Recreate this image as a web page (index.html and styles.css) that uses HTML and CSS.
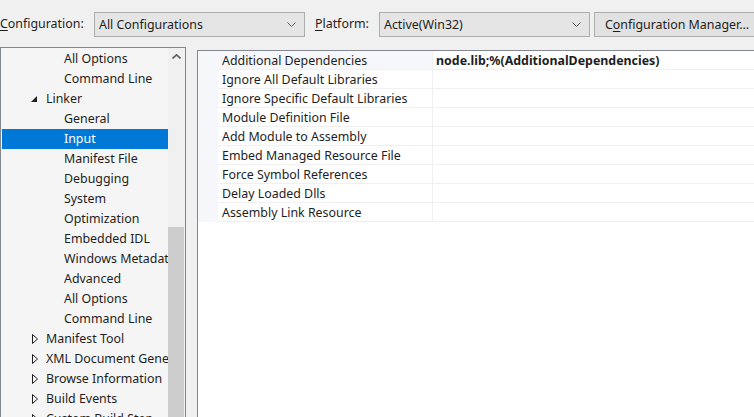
FILE: index.html
```html
<!DOCTYPE html>
<html>
<head>
<meta charset="utf-8">
<link rel="stylesheet" href="styles.css">
</head>
<body>
<div class="toolbar">
  <span class="label cfg-label"><u>C</u>onfiguration:</span>
  <div class="combo cfg-combo"><span>All Configurations</span><svg class="chev" width="9" height="5" viewBox="0 0 9 5"><path d="M0.5 0.5 L4.5 4.5 L8.5 0.5" fill="none" stroke="#5a5a5a" stroke-width="1"/></svg></div>
  <span class="label plat-label"><u>P</u>latform:</span>
  <div class="combo plat-combo"><span>Active(Win32)</span><svg class="chev" width="9" height="5" viewBox="0 0 9 5"><path d="M0.5 0.5 L4.5 4.5 L8.5 0.5" fill="none" stroke="#5a5a5a" stroke-width="1"/></svg></div>
  <div class="button">C<u>o</u>nfiguration Manager...</div>
</div>
<div class="main">
  <div class="tree-panel">
    <div class="tree">
      <div class="node l2">All Options</div>
      <div class="node l2">Command Line</div>
      <div class="node l1"><svg class="tri" width="6" height="6" viewBox="0 0 6 6"><path d="M6 0 L6 6 L0 6 Z" fill="#1e1e1e"/></svg>Linker</div>
      <div class="node l2">General</div>
      <div class="node l2 selected">Input</div>
      <div class="node l2">Manifest File</div>
      <div class="node l2">Debugging</div>
      <div class="node l2">System</div>
      <div class="node l2">Optimization</div>
      <div class="node l2">Embedded IDL</div>
      <div class="node l2">Windows Metadata</div>
      <div class="node l2">Advanced</div>
      <div class="node l2">All Options</div>
      <div class="node l2">Command Line</div>
      <div class="node l1"><svg class="tri c" width="6" height="10" viewBox="0 0 6 10"><path d="M0.5 0.5 L5.5 5 L0.5 9.5 Z" fill="none" stroke="#1e1e1e" stroke-width="1"/></svg>Manifest Tool</div>
      <div class="node l1"><svg class="tri c" width="6" height="10" viewBox="0 0 6 10"><path d="M0.5 0.5 L5.5 5 L0.5 9.5 Z" fill="none" stroke="#1e1e1e" stroke-width="1"/></svg>XML Document Generator</div>
      <div class="node l1"><svg class="tri c" width="6" height="10" viewBox="0 0 6 10"><path d="M0.5 0.5 L5.5 5 L0.5 9.5 Z" fill="none" stroke="#1e1e1e" stroke-width="1"/></svg>Browse Information</div>
      <div class="node l1"><svg class="tri c" width="6" height="10" viewBox="0 0 6 10"><path d="M0.5 0.5 L5.5 5 L0.5 9.5 Z" fill="none" stroke="#1e1e1e" stroke-width="1"/></svg>Build Events</div>
      <div class="node l1"><svg class="tri c" width="6" height="10" viewBox="0 0 6 10"><path d="M0.5 0.5 L5.5 5 L0.5 9.5 Z" fill="none" stroke="#1e1e1e" stroke-width="1"/></svg>Custom Build Step</div>
    </div>
    <div class="scrollbar">
      <div class="arrow"><svg width="9" height="5" viewBox="0 0 9 5"><path d="M0.5 4.5 L4.5 0.8 L8.5 4.5" fill="none" stroke="#606060" stroke-width="1.6"/></svg></div>
      <div class="track"></div>
      <div class="thumb"></div>
    </div>
  </div>
  <div class="grid-panel">
    <div class="grid">
      <div class="row current"><div class="stripe"></div><div class="name">Additional Dependencies</div><div class="value bold">node.lib;%(AdditionalDependencies)</div></div>
      <div class="row"><div class="stripe"></div><div class="name">Ignore All Default Libraries</div><div class="value"></div></div>
      <div class="row"><div class="stripe"></div><div class="name">Ignore Specific Default Libraries</div><div class="value"></div></div>
      <div class="row"><div class="stripe"></div><div class="name">Module Definition File</div><div class="value"></div></div>
      <div class="row"><div class="stripe"></div><div class="name">Add Module to Assembly</div><div class="value"></div></div>
      <div class="row"><div class="stripe"></div><div class="name">Embed Managed Resource File</div><div class="value"></div></div>
      <div class="row"><div class="stripe"></div><div class="name">Force Symbol References</div><div class="value"></div></div>
      <div class="row"><div class="stripe"></div><div class="name">Delay Loaded Dlls</div><div class="value"></div></div>
      <div class="row"><div class="stripe"></div><div class="name">Assembly Link Resource</div><div class="value"></div></div>
    </div>
  </div>
</div>
</body>
</html>
```
FILE: styles.css
```css
html, body {
  margin: 0;
  padding: 0;
  width: 754px;
  height: 417px;
  overflow: hidden;
  background: #f0f0f0;
  font-family: "Noto Sans", "Liberation Sans", sans-serif;
  font-size: 12.4px;
  color: #1e1e1e;
}
u { text-decoration: underline; text-underline-offset: 2px; }

.toolbar {
  display: flex;
  align-items: center;
  height: 48px;
  white-space: nowrap;
}
.toolbar > * { flex-shrink: 0; }
.label { line-height: 24px; }
.cfg-label { width: 94px; }
.plat-label { margin-left: 10px; width: 64px; }
.combo {
  box-sizing: border-box;
  height: 25px;
  width: 211px;
  border: 1px solid #adadad;
  background: #e5e5e5;
  display: flex;
  align-items: center;
  justify-content: space-between;
  padding: 0 8px 0 4px;
}
.button {
  box-sizing: border-box;
  margin-left: 4px;
  height: 25px;
  width: 170px;
  border: 1px solid #adadad;
  background: #e1e1e1;
  display: flex;
  align-items: center;
  padding-left: 10px;
}

.main {
  display: flex;
  align-items: flex-start;
  gap: 11px;
  margin-top: -1px;
}
.tree-panel {
  flex: 0 0 auto;
  width: 184px;
  height: 400px;
  border: 1px solid #828790;
  background: #f5f5f5;
  display: flex;
}
.tree {
  width: 167px;
  padding-top: 1px;
  overflow: hidden;
}
.node {
  height: 20px;
  line-height: 20px;
  white-space: nowrap;
  display: flex;
  align-items: center;
  overflow: hidden;
  margin-left: 1px;
}
.node.l1 { padding-left: 29px; }
.node.l2 { padding-left: 62px; }
.node.selected { background: #0078d7; color: #fff; }
.tri { margin-right: 9px; flex-shrink: 0; }
.tri.c { margin-left: 1px; margin-right: 8px; }

.scrollbar {
  width: 17px;
  background: #f0f0f0;
  display: flex;
  flex-direction: column;
}
.arrow {
  height: 17px;
  display: flex;
  align-items: center;
  justify-content: center;
}
.track { height: 162px; }
.thumb {
  flex: 1;
  margin: 0 1px 0 0;
  background: #cdcdcd;
}

.grid-panel {
  flex: 1;
  margin-top: 3px;
  height: 400px;
  border: 1px solid #828790;
  border-right: none;
  background: #fff;
}
.row {
  display: flex;
  height: 19px;
}
.stripe {
  width: 20px;
  background: #f5f7fa;
}
.name {
  box-sizing: border-box;
  width: 215px;
  padding-left: 4px;
  line-height: 19px;
  border-bottom: 1px solid #f0f0f0;
  border-right: 1px solid #f0f0f0;
  white-space: nowrap;
  overflow: hidden;
}
.row.current .name { background: #f5f7fa; }
.value {
  flex: 1;
  box-sizing: border-box;
  padding-left: 3px;
  line-height: 19px;
  border-bottom: 1px solid #f0f0f0;
  white-space: nowrap;
}
.bold { font-weight: bold; }
```
